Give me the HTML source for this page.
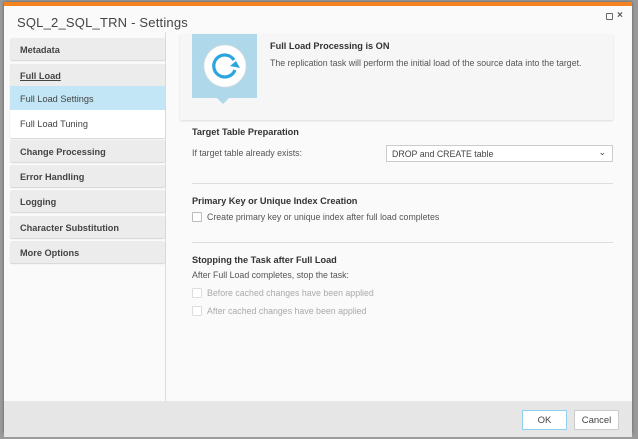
<!DOCTYPE html>
<html><head><meta charset="utf-8"><style>
*{box-sizing:border-box;margin:0;padding:0}
body{width:638px;height:439px;background:#9a9a9a;font-family:"Liberation Sans",sans-serif;color:#333;position:relative;overflow:hidden}
.dlg{position:absolute;left:4px;top:2px;width:628px;height:431px;background:#fafafa;border-top:4px solid #f58220;box-shadow:0 0 3px rgba(0,0,0,.4)}
.t{position:absolute;left:13px;top:9px;font-size:13px;color:#444;letter-spacing:.2px}
.nav{position:absolute;left:0;top:26px;width:162px;height:369px;border-right:1px solid #ddd}
.it{position:absolute;left:6px;width:155px;height:22px;background:#ececec;border-radius:2px;box-shadow:0 1px 1px rgba(0,0,0,.15);font-size:9.2px;font-weight:bold;color:#444;padding:7px 0 0 10px}
.foot{position:absolute;left:0;top:395px;width:628px;height:36px;background:#e6e6e6}
.btn{position:absolute;top:404px;height:20px;background:#fff;border:1px solid #ccc;font-size:9.5px;text-align:center;padding-top:4px;color:#444}
.h{position:absolute;font-size:9.2px;font-weight:bold;color:#333;white-space:nowrap}
.p{position:absolute;font-size:8.8px;color:#555;white-space:nowrap}
.cb{position:absolute;width:10px;height:10px;border:1px solid #bbb;background:#fff;border-radius:1px}
.hr{position:absolute;left:188px;width:421px;height:1px;background:#ddd}
</style></head><body>
<div class="dlg">
<div class="t">SQL_2_SQL_TRN - Settings</div>
<div style="position:absolute;left:602px;top:7px;width:7px;height:7px;border:1.3px solid #666;border-radius:1px"></div>
<div style="position:absolute;left:613px;top:4px;font-size:10px;font-weight:bold;color:#555">×</div>
<div class="nav">
<div class="it" style="top:6px">Metadata</div>
<div class="it" style="top:32px;height:74px;background:#fff;padding:0"><div style="height:22px;background:#ececec;padding:7px 0 0 10px;text-decoration:underline">Full Load</div>
<div style="height:24px;background:#c2e6f5;font-weight:normal;padding:8px 0 0 10px">Full Load Settings</div>
<div style="height:26px;font-weight:normal;padding:9px 0 0 10px">Full Load Tuning</div></div>
<div class="it" style="top:108px">Change Processing</div>
<div class="it" style="top:133px">Error Handling</div>
<div class="it" style="top:158px">Logging</div>
<div class="it" style="top:184px">Character Substitution</div>
<div class="it" style="top:209px">More Options</div>
</div>
<div style="position:absolute;left:176px;top:28px;width:433px;height:86px;background:#f6f6f6;box-shadow:0 1px 2px rgba(0,0,0,.12)"></div>
<svg style="position:absolute;left:188px;top:28px" width="66" height="76">
<path d="M0 0H65V64H37L31 70L25 64H0Z" fill="#afd9ea"/>
<circle cx="33" cy="32" r="21" fill="#fff"/><circle cx="33" cy="32" r="21" fill="none" stroke="#ddd" stroke-width=".8"/>
<path d="M42 26A11 11 0 1 0 43 36" fill="none" stroke="#2aa5de" stroke-width="3.2"/>
<path d="M38 32L44 27L48 34Z" fill="#2aa5de"/>
</svg>
<div class="h" style="left:266px;top:35px">Full Load Processing is ON</div>
<div class="p" style="left:266px;top:52px">The replication task will perform the initial load of the source data into the target.</div>
<div class="h" style="left:188px;top:121px">Target Table Preparation</div>
<div class="p" style="left:188px;top:142px">If target table already exists:</div>
<div style="position:absolute;left:382px;top:139px;width:227px;height:17px;background:#fff;border:1px solid #ccc;font-size:8.8px;color:#444;padding:3px 0 0 5px">DROP and CREATE table<span style="position:absolute;right:6px;top:1px;font-size:9px">⌄</span></div>
<div class="hr" style="top:177px"></div>
<div class="h" style="left:188px;top:190px">Primary Key or Unique Index Creation</div>
<div class="cb" style="left:188px;top:206px"></div>
<div class="p" style="left:203px;top:206px">Create primary key or unique index after full load completes</div>
<div class="hr" style="top:236px"></div>
<div class="h" style="left:188px;top:249px">Stopping the Task after Full Load</div>
<div class="p" style="left:188px;top:264px">After Full Load completes, stop the task:</div>
<div class="cb" style="left:188px;top:282px;border-color:#ddd"></div>
<div class="p" style="left:203px;top:282px;color:#aaa">Before cached changes have been applied</div>
<div class="cb" style="left:188px;top:300px;border-color:#ddd"></div>
<div class="p" style="left:203px;top:300px;color:#aaa">After cached changes have been applied</div>
<div class="foot"></div>
<div class="btn" style="left:518px;width:45px;border-color:#8fd0ee">OK</div>
<div class="btn" style="left:570px;width:45px">Cancel</div>
</div>
</body></html>
